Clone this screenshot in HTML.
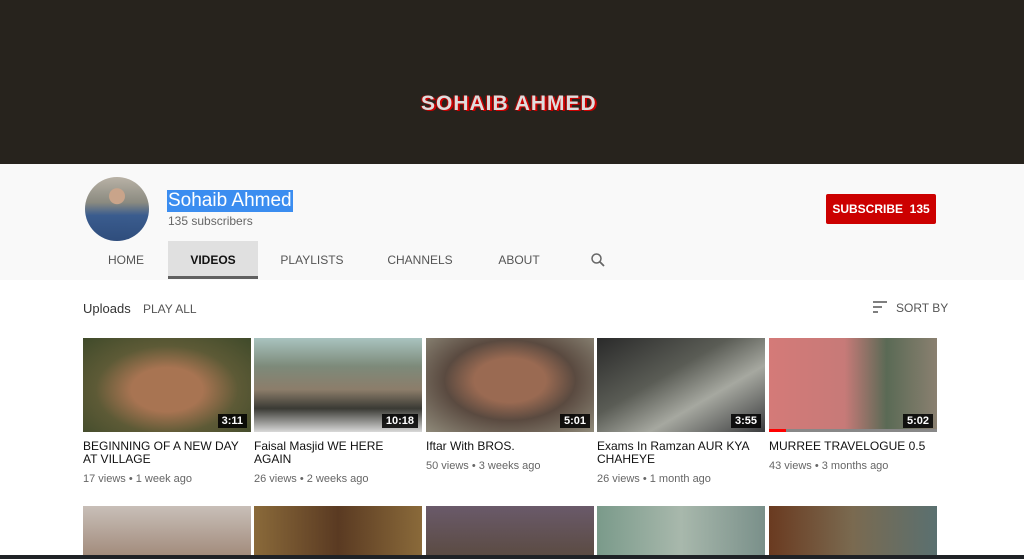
<!DOCTYPE html>
<html><head><meta charset="utf-8"><style>
*{margin:0;padding:0;box-sizing:border-box}
body{width:1024px;height:559px;overflow:hidden;background:#fff;font-family:"Liberation Sans",Arial,sans-serif;position:relative}
.a{position:absolute}
.banner{left:0;top:0;width:1024px;height:164px;background:#27231d}
.logo{left:421px;top:92px;font:bold 21px "Liberation Sans",sans-serif;color:#ddd;letter-spacing:1px;text-shadow:2px 1px 0 #c00,-1px 0 1px #c00}
.hdr{left:0;top:164px;width:1024px;height:116px;background:#f9f9f9}
.av{left:85px;top:177px;width:64px;height:64px;border-radius:50%;background:radial-gradient(circle at 50% 30%,#c9a48a 0 14%,transparent 15%),linear-gradient(180deg,#b9b2a6 0%,#8a8a80 40%,#3a5c8e 60%,#2f4d7c 100%)}
.name{left:167px;top:190px;font-size:19px;color:#fff;background:#3b8df0;padding:0 1px;line-height:22px}
.subs{left:168px;top:214px;font-size:12px;color:#666}
.sub{left:826px;top:194px;width:110px;height:30px;background:#cc0000;color:#fff;font-size:12px;font-weight:bold;text-align:center;line-height:30px;border-radius:2px}
.tab{top:241px;height:38px;line-height:38px;font-size:12px;color:#555;text-align:center}
.vid{left:168px;width:90px;background:#e0e0e0;color:#111;font-weight:bold;border-bottom:3px solid #606060}
.up{left:83px;top:301px;font-size:13px;color:#333}
.pa{left:143px;top:302px;font-size:12px;color:#555}
.sort{left:896px;top:301px;font-size:12px;color:#555}
.th{top:338px;width:168px;height:94px}
.dur{right:4px;bottom:4px;background:rgba(0,0,0,.85);color:#fff;font-size:11px;font-weight:bold;padding:1px 4px}
.t{font-size:12px;color:#111;line-height:13px;width:160px}
.m{font-size:11px;color:#666}
.th2{top:506px;width:168px;height:53px}
.bot{left:0;top:555px;width:1024px;height:4px;background:#1f2226}
</style></head><body>
<div class="a banner"></div>
<div class="a logo">SOHAIB AHMED</div>
<div class="a hdr"></div>
<div class="a av"></div>
<div class="a name">Sohaib Ahmed</div>
<div class="a subs">135 subscribers</div>
<div class="a sub">SUBSCRIBE&nbsp; 135</div>
<div class="a tab" style="left:101px;width:50px">HOME</div>
<div class="a tab vid">VIDEOS</div>
<div class="a tab" style="left:272px;width:80px">PLAYLISTS</div>
<div class="a tab" style="left:380px;width:80px">CHANNELS</div>
<div class="a tab" style="left:490px;width:58px">ABOUT</div>
<svg class="a" style="left:589px;top:251px" width="18" height="18" viewBox="0 0 24 24"><circle cx="10" cy="10" r="6" fill="none" stroke="#666" stroke-width="2"/><path d="M14.5 14.5L20 20" stroke="#666" stroke-width="2.4"/></svg>
<div class="a up">Uploads</div>
<div class="a pa">PLAY ALL</div>
<svg class="a" style="left:872px;top:300px" width="16" height="14" viewBox="0 0 16 14"><path d="M1 2h14M1 7h9M1 12h5" stroke="#555" stroke-width="1.6"/></svg>
<div class="a sort">SORT BY</div>

<div class="a th" style="left:83px;background:radial-gradient(ellipse at 50% 55%,#a87452 0 30%,#5d5a36 60%,#3f4a2a 100%)"><div class="a dur">3:11</div></div>
<div class="a th" style="left:254px;background:linear-gradient(180deg,#a9c3bf 0,#7d8a7a 30%,#8c7d6a 55%,#3a3a34 75%,#d9d9d9 100%)"><div class="a dur">10:18</div></div>
<div class="a th" style="left:426px;background:radial-gradient(ellipse at 50% 45%,#9a6a52 0 30%,#5a4a40 55%,#8f8a7a 100%)"><div class="a dur">5:01</div></div>
<div class="a th" style="left:597px;background:linear-gradient(150deg,#2a2a2a 0,#5a5c55 40%,#a6a8a0 65%,#3a3b3d 100%)"><div class="a dur">3:55</div></div>
<div class="a th" style="left:769px;background:linear-gradient(90deg,#d47a78 0,#c77a78 45%,#5a6a55 70%,#8a8070 100%)"><div class="a dur">5:02</div><div class="a" style="left:0;bottom:0;width:168px;height:3px;background:#888"></div><div class="a" style="left:0;bottom:0;width:17px;height:3px;background:#f00"></div></div>

<div class="a t" style="left:83px;top:440px">BEGINNING OF A NEW DAY AT VILLAGE</div>
<div class="a m" style="left:83px;top:473px">17 views • 1 week ago</div>
<div class="a t" style="left:254px;top:440px;width:140px">Faisal Masjid WE HERE AGAIN</div>
<div class="a m" style="left:254px;top:473px">26 views • 2 weeks ago</div>
<div class="a t" style="left:426px;top:440px">Iftar With BROS.</div>
<div class="a m" style="left:426px;top:460px">50 views • 3 weeks ago</div>
<div class="a t" style="left:597px;top:440px">Exams In Ramzan AUR KYA CHAHEYE</div>
<div class="a m" style="left:597px;top:473px">26 views • 1 month ago</div>
<div class="a t" style="left:769px;top:440px">MURREE TRAVELOGUE 0.5</div>
<div class="a m" style="left:769px;top:460px">43 views • 3 months ago</div>

<div class="a th2" style="left:83px;background:linear-gradient(180deg,#c8bfb8,#a08878)"></div>
<div class="a th2" style="left:254px;background:linear-gradient(90deg,#8a6a3a,#5a3a22 50%,#8a6a3a)"></div>
<div class="a th2" style="left:426px;background:linear-gradient(180deg,#6a5a6a,#5a4a40)"></div>
<div class="a th2" style="left:597px;background:linear-gradient(90deg,#7a9a8a,#a8b8ac 50%,#7a908a)"></div>
<div class="a th2" style="left:769px;background:linear-gradient(90deg,#6a3a20,#7a6a50 50%,#5a7070)"></div>
<div class="a bot"></div>
</body></html>
